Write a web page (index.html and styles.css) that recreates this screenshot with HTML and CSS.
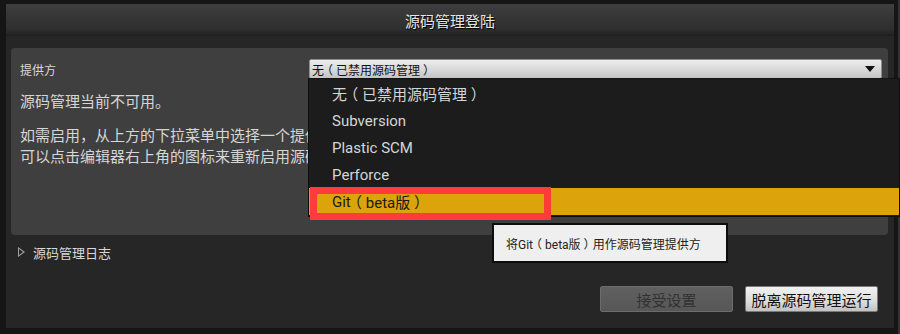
FILE: index.html
```html
<!DOCTYPE html>
<html lang="zh-CN">
<head>
<meta charset="utf-8">
<title>源码管理登陆</title>
<link rel="stylesheet" href="styles.css">
</head>
<body>
<div class="window">
  <div class="titlebar">源码管理登陆</div>
  <div class="content">
    <div class="panel">
      <div class="provider-row">
        <div class="label">提供方</div>
        <div class="combo">
          <span class="combo-text">无<span class="pp">（</span>已禁用源码管理<span class="pp">）</span></span>
          <span class="combo-arrow"></span>
          <div class="menu">
            <div class="item">无<span class="pp">（</span>已禁用源码管理<span class="pp">）</span></div>
            <div class="item">Subversion</div>
            <div class="item">Plastic SCM</div>
            <div class="item">Perforce</div>
            <div class="item active">Git<span class="pp">（</span>beta版<span class="pp">）</span></div>
          </div>
        </div>
      </div>
      <div class="desc">
        <p class="para">源码管理当前不可用。</p>
        <p class="para">如需启用，从上方的下拉菜单中选择一个提供方。你也<br>可以点击编辑器右上角的图标来重新启用源码管理。</p>
      </div>
    </div>
    <div class="log-row">
      <span class="tri"></span>
      <span class="log-text">源码管理日志</span>
    </div>
    <div class="buttons">
      <div class="btn disabled">接受设置</div>
      <div class="btn primary">脱离源码管理运行</div>
    </div>
  </div>
  <div class="annot"></div>
  <div class="tooltip">将Git<span class="pp">（</span>beta版<span class="pp">）</span>用作源码管理提供方</div>
</div>
</body>
</html>
```

FILE: styles.css
```css
html, body {
  margin: 0;
  padding: 0;
}
body {
  width: 900px;
  height: 334px;
  overflow: hidden;
  background: #161616;
  font-family: Roboto, "Noto Sans CJK SC", sans-serif;
  text-spacing-trim: space-all;
  font-kerning: none;
}
.pp {
  font-family: "Noto Sans CJK SC", sans-serif;
  font-feature-settings: "halt";
  padding: 0 0.25em;
}
.window {
  position: relative;
  box-sizing: border-box;
  width: 900px;
  height: 334px;
  padding: 4px 4px 6px 6px;
  border-right: 2px solid #333333;
  background: #151515;
  display: flex;
  flex-direction: column;
}
.titlebar {
  flex: none;
  height: 32px;
  background: linear-gradient(#3e3e3e, #2e2e2e 80%, #1f1f1f);
  display: flex;
  align-items: center;
  justify-content: center;
  color: #e6e6e6;
  font-size: 15px;
  text-shadow: 1px 1px 1px #000;
}
.content {
  flex: 1;
  background: #262626;
  padding: 12px 6px 0 5px;
  display: flex;
  flex-direction: column;
}
.panel {
  flex: none;
  box-sizing: border-box;
  height: 187px;
  background: #3f3f3f;
  border-radius: 4px;
  padding: 11px 6px 0 9px;
}
.provider-row {
  display: flex;
  align-items: center;
  height: 20px;
}
.label {
  flex: 0 0 289px;
  font-size: 12px;
  color: #d8d8d8;
}
.combo {
  position: relative;
  flex: 1;
  box-sizing: border-box;
  height: 20px;
  display: flex;
  align-items: center;
  padding: 0 6px 0 2px;
  background: linear-gradient(#ececec, #d6d6d6 60%, #c4c4c4);
  border: 1px solid #8e8e8e;
  border-radius: 2px;
  font-size: 12px;
  color: #111;
}
.combo-text {
  flex: 1;
}
.combo-arrow {
  width: 0;
  height: 0;
  border-left: 5px solid transparent;
  border-right: 5px solid transparent;
  border-top: 6px solid #111;
}
.menu {
  position: absolute;
  top: 100%;
  left: -2px;
  right: -19px;
  box-sizing: border-box;
  height: 139px;
  background: #1c1c1c;
  border: 1px solid #0e0e0e;
  border-top-color: #121212;
  padding: 1px 0;
}
.item {
  height: 27px;
  display: flex;
  align-items: center;
  padding-left: 23px;
  font-size: 15px;
  color: #d6d6d6;
}
.item.active {
  background: #dca30a;
  color: #1a1a1a;
}
.desc {
  margin-top: 13px;
  font-size: 15px;
  color: #d6d6d6;
  line-height: 21px;
}
.para {
  margin: 0 0 13px 0;
  white-space: nowrap;
}
.log-row {
  flex: none;
  height: 18px;
  margin-top: 8px;
  padding-left: 7px;
  display: flex;
  align-items: center;
  gap: 8px;
}
.tri {
  position: relative;
  width: 0;
  height: 0;
  border-top: 5px solid transparent;
  border-bottom: 5px solid transparent;
  border-left: 7px solid #a0a0a0;
}
.tri::after {
  content: "";
  position: absolute;
  left: -6px;
  top: -3px;
  width: 0;
  height: 0;
  border-top: 3px solid transparent;
  border-bottom: 3px solid transparent;
  border-left: 4px solid #262626;
}
.log-text {
  font-size: 13px;
  color: #d8d8d8;
}
.buttons {
  flex: none;
  margin-top: 25px;
  padding-right: 10px;
  display: flex;
  justify-content: flex-end;
  gap: 12px;
}
.btn {
  box-sizing: border-box;
  width: 133px;
  height: 26px;
  display: flex;
  align-items: center;
  justify-content: center;
  font-size: 15px;
  border-radius: 2px;
}
.btn.disabled {
  background: linear-gradient(#606060, #575757);
  border: 1px solid #6c6c6c;
  color: #313131;
}
.btn.primary {
  background: linear-gradient(#f2f2f2, #dcdcdc 60%, #c2c2c2);
  border: 1px solid #7a7a7a;
  color: #111;
}
.annot {
  position: absolute;
  left: 310px;
  top: 187px;
  box-sizing: border-box;
  width: 241px;
  height: 33px;
  border: 7px solid #ff3b3b;
}
.tooltip {
  position: absolute;
  left: 492px;
  top: 223px;
  box-sizing: border-box;
  width: 236px;
  height: 40px;
  padding-left: 12px;
  display: flex;
  align-items: center;
  background: #efefef;
  border: 2px solid #0d0d0d;
  font-size: 12px;
  color: #222;
}
```
